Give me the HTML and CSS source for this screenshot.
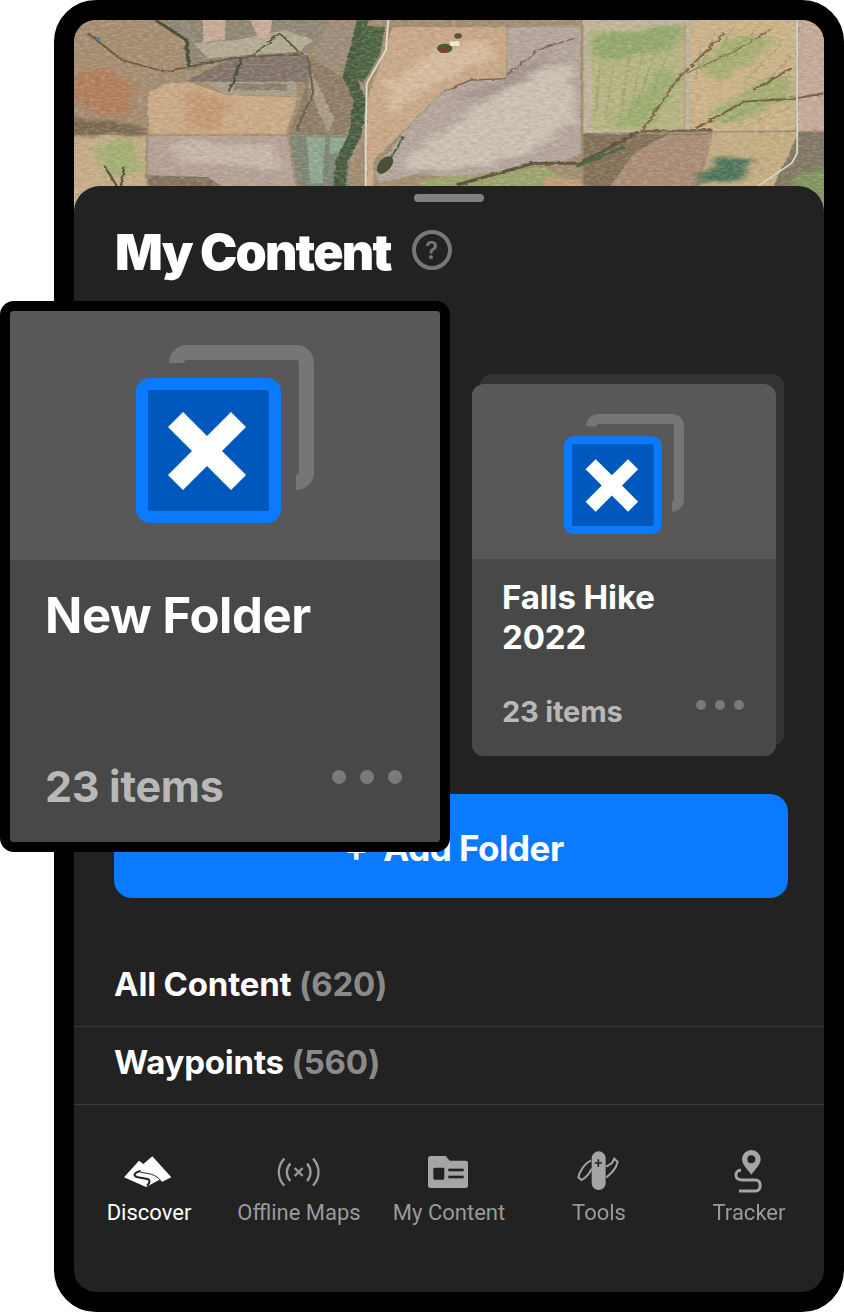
FILE: index.html
```html
<!DOCTYPE html>
<html lang="en">
<head>
<meta charset="utf-8">
<title>My Content</title>
<link rel="stylesheet" href="styles.css">
</head>
<body>
<svg class="defs" width="0" height="0" aria-hidden="true">
  <symbol id="folder-x" viewBox="136 345 178 178">
    <path fill="#767676" d="M169 363A18 18 0 0 1 187 345H296A18 18 0 0 1 314 363V472A18 18 0 0 1 296 490V475Q299 475 299 472V363Q299 360 296 360H187Q184 360 184 363Z"/>
    <rect x="136" y="378" width="145" height="145" rx="14" fill="#0a7aff"/>
    <rect x="148" y="390" width="121" height="121" rx="2" fill="#0058bd"/>
    <path fill="#fff" d="M183 412L207 436L231 412L246 427L222 451L246 475L231 490L207 466L183 490L168 475L192 451L168 427Z"/>
  </symbol>
  <filter id="sat" x="-5%" y="-5%" width="110%" height="110%">
    <feTurbulence type="fractalNoise" baseFrequency="0.03 0.06" numOctaves="3" seed="4" result="n"/>
    <feDisplacementMap in="SourceGraphic" in2="n" scale="7" xChannelSelector="R" yChannelSelector="G" result="d"/>
    <feGaussianBlur in="d" stdDeviation="1.6 1"/>
  </filter>
  <filter id="soft" x="-10%" y="-10%" width="120%" height="120%">
    <feTurbulence type="fractalNoise" baseFrequency="0.02 0.04" numOctaves="4" seed="7" result="n"/>
    <feDisplacementMap in="SourceGraphic" in2="n" scale="40" result="d"/>
    <feGaussianBlur in="d" stdDeviation="9 5"/>
  </filter>
  <filter id="line" x="-5%" y="-5%" width="110%" height="110%">
    <feTurbulence type="fractalNoise" baseFrequency="0.05 0.09" numOctaves="3" seed="12" result="n"/>
    <feDisplacementMap in="SourceGraphic" in2="n" scale="9" result="d"/>
    <feGaussianBlur in="d" stdDeviation="1.4 .8"/>
  </filter>
  <filter id="grain" x="0" y="0" width="100%" height="100%">
    <feTurbulence type="fractalNoise" baseFrequency="0.09 0.16" numOctaves="4" seed="9"/>
    <feColorMatrix values="0 0 0 0 .95  0 0 0 0 .9  0 0 0 0 .82  1.8 0 0 0 -.72"/>
  </filter>
  <filter id="grain-dark" x="0" y="0" width="100%" height="100%">
    <feTurbulence type="fractalNoise" baseFrequency="0.07 0.12" numOctaves="4" seed="21"/>
    <feColorMatrix values="0 0 0 0 .25  0 0 0 0 .2  0 0 0 0 .12  1.8 0 0 0 -.72"/>
  </filter>
</svg>

<div class="phone">
  <div class="screen">
    <svg class="map" viewBox="0 0 1568 600" preserveAspectRatio="none" aria-hidden="true">
      <rect width="1568" height="600" fill="#a08b70"/>
      <g filter="url(#sat)">
        <path fill="#a58b6f" d="M-20-20H240V130L150 165V345H-20Z"/>
        <path fill="#8d8472" d="M170-20H540L525 60L480 100L330 110L235 155L230 60Z"/>
        <path fill="#b3aa92" d="M250 70L340 60L440 30L500 60L470 95L360 105L280 115Z"/>
        <path fill="#c9ab98" d="M270-20H320L315 60L270 65Z"/>
        <path fill="#c9ab98" d="M360-20H418L405 60L385 50Z"/>
        <path fill="#7e6f67" d="M235 182L335 112L490 105L490 186H250Z"/>
        <path fill="#a89c88" d="M270 185H465V228L320 225Z"/>
        <rect x="335" y="190" width="110" height="20" fill="#867c6e"/>
        <path fill="#cca985" d="M155 345V220L190 192L240 186L320 226L468 232L442 345Z"/>
        <path fill="#8c7a64" d="M495 110L565 175L590 240L570 345H450L480 220Z"/>
        <path fill="#a99a84" d="M495 150L545 300L530 340L490 200Z"/>
        <path fill="#9b8a78" d="M525 15L588 10L565 150L500 112Z"/>
        <path fill="#c7ad88" d="M-20 345H150V600H-20Z"/>
        <path fill="#b5a097" d="M155 347H445L472 600H155Z"/>
        <path fill="#7f6f5c" d="M155 465L280 472L320 510H155Z"/>
        <path fill="#7a8472" d="M450 347H575V510H470Z"/>
        <path fill="#8ba690" d="M485 350H525L520 490H495Z"/>
        <path fill="#8ba690" d="M535 352H570L560 400H535Z"/>
        <path fill="none" stroke="#42593a" stroke-width="26" d="M606-10L575 170L598 240L588 345L560 420L548 600"/>
        <path fill="#47603e" d="M610 20H650L640 100L605 190L585 170Z"/>
        <path fill="#c9a887" d="M612 600V245L650 90L666 20H905V176L830 180L770 215L690 330L626 420L626 600Z"/>
        <path fill="#b3a59d" d="M905 20L1060 15V400L1020 425L940 430L890 465L790 475L720 460L640 490L628 455L690 335L770 218L830 182L905 176Z"/>
        <path fill="#bfb59c" d="M1065-20H1510V332L1065 340Z"/>
        <path fill="#b6b481" d="M1080 30H1275V330H1085Z"/>
        <path fill="#cdb389" d="M1290 0H1505V330H1290Z"/>
        <path fill="#c6aa98" d="M1515-20H1600V332H1515Z"/>
        <path fill="#7f6d54" d="M1065 343H1335V600H1065Z"/>
        <path fill="#a98b74" d="M1170 400L1240 345H1335V500L1120 500Z"/>
        <path fill="#c5ad82" d="M1337 337H1510V420L1430 600H1290Z"/>
        <path fill="#7d7460" d="M1515 337H1600V600H1430Z"/>
        <path fill="#9aa36b" d="M720 480L980 440L1062 498V600H720Z"/>
        <path fill="#bf9c78" d="M980 470L1060 480V600H980Z"/>
      </g>
      <g filter="url(#soft)">
        <path fill="#b4754f" opacity=".75" d="M-20 170L60 140L120 190L110 290L50 280L-20 230Z"/>
        <path fill="#6b5c46" opacity=".8" d="M-20 290L60 300L150 325V345H-20Z"/>
        <path fill="#c39268" opacity=".7" d="M240 200L320 240L300 330L230 330Z"/>
        <path fill="#dcc3a6" opacity=".75" d="M650 190L760 90L860 60L880 110L760 190L660 290Z"/>
        <path fill="#d5c8bc" opacity=".8" d="M700 400L870 240L940 170L1040 120L1050 300L950 400L820 440L690 450Z"/>
        <path fill="#998888" opacity=".65" d="M790 240L900 175L1000 80L950 180L860 230Z"/>
        <path fill="#8aa764" opacity=".85" d="M1085 50L1270 10V70L1130 120L1085 110Z"/>
        <path fill="#93ad68" opacity=".7" d="M1120 320L1230 150L1270 170L1200 320Z"/>
        <path fill="#97ad68" opacity=".75" d="M1300 130L1390 40L1470 60L1350 190Z"/>
        <path fill="#98ad6a" opacity=".8" d="M1300 310L1400 215L1500 160V240L1390 300Z"/>
        <path fill="#9ab06d" opacity=".8" d="M40 380L125 355L145 450L70 480Z"/>
        <path fill="#d8cdc2" opacity=".5" d="M200 370H420L440 450L220 430Z"/>
        <path fill="#3e6e52" opacity=".95" d="M1345 410L1425 415L1395 480L1295 495Z"/>
        <path fill="#7f9c5c" opacity=".8" d="M1510 470L1600 430V600H1500Z"/>
      </g>
      <g fill="none" stroke="#7f9e5c" stroke-width="3" opacity=".55" filter="url(#line)">
        <path d="M1100 130L1090 290M1130 120L1110 300M1160 110L1140 320M1190 90L1160 300M1220 80L1170 280M1250 60L1200 260"/>
        <path d="M1310 90L1300 180M1340 40L1310 150M1380 20L1340 110M1430 20L1370 120M1480 70L1400 190M1500 110L1420 220M1450 240L1340 320M1500 260L1400 320"/>
      </g>
      <rect width="1568" height="600" filter="url(#grain)" opacity=".32"/>
      <rect width="1568" height="600" filter="url(#grain-dark)" opacity=".3"/>
      <g fill="none" filter="url(#line)">
        <path stroke="#6a5c42" stroke-width="5" d="M30 40L100 120L190 155L240 140L330 115L480 100"/>
        <path stroke="#4a553b" stroke-width="6" d="M350 115L325 215"/>
        <path stroke="#4a553b" stroke-width="8" d="M170 0L235 60L240 140"/>
        <path stroke="#4f5a40" stroke-width="4" d="M370 110L430 40L470 95"/>
        <path stroke="#6c6456" stroke-width="5" d="M490 110L500 220L465 330"/>
        <path stroke="#7d6557" stroke-width="4" d="M905 165L970 90L1045 55"/>
        <path stroke="#7d6557" stroke-width="4" d="M905 176L830 180L775 212"/>
        <path stroke="#806a4e" stroke-width="5" d="M1190 330L1260 180L1360 40"/>
        <path stroke="#7a6448" stroke-width="6" d="M1300 325L1400 245L1510 235L1568 220"/>
        <path stroke="#7a6448" stroke-width="6" d="M1420 210L1500 145"/>
        <path stroke="#806a4e" stroke-width="3" d="M1280 160L1380 95L1460 25"/>
        <path stroke="#635640" stroke-width="9" d="M1180 335L1060 430L960 430L800 495"/>
        <path stroke="#4c6a45" stroke-width="7" d="M1050 440L1150 380"/>
        <path stroke="#5f5542" stroke-width="5" d="M65 440L90 500M105 440L98 500"/>
        <path stroke="#50684a" stroke-width="5" d="M690 350L660 420"/>
        <path stroke="#74654c" stroke-width="8" d="M1185 335L1335 330"/>
      </g>
      <g fill="none">
        <path stroke="#dcdccf" stroke-width="4" d="M657 0L652 90L612 190L610 340V600"/>
        <path stroke="#d8d4c8" stroke-width="4" d="M1512 0V400L1500 430L1430 498"/>
        <path stroke="#8f7e66" stroke-width="2" opacity=".6" d="M0 343H600M1065 340L1510 332M905 20H1060V400M665 20H905V176"/>
        <path stroke="#af8f6c" stroke-width="2" d="M1277 0V330M1063 0V340"/>
      </g>
      <ellipse cx="650" cy="435" rx="14" ry="28" fill="#4a5036" transform="rotate(25 650 435)"/>
      <ellipse cx="775" cy="85" rx="16" ry="14" fill="#4a5a36"/>
      <ellipse cx="772" cy="92" rx="7" ry="7" fill="#8c3a30"/>
      <rect x="786" y="64" width="20" height="14" fill="#eee8cc"/>
      <circle cx="803" cy="48" r="8" fill="#5a5044"/>
      <circle cx="50" cy="57" r="5" fill="#4a7ca8"/>
    </svg>

    <div class="sheet">
      <div class="handle"></div>
      <div class="title-row">
        <h1 class="title">My Content</h1>
        <span class="help">?</span>
      </div>

      <div class="carousel">
        <article class="card">
          <div class="card-top">
            <svg class="folder-icon"><use href="#folder-x"/></svg>
          </div>
          <div class="card-body">
            <h2 class="card-name">Falls Hike<br>2022</h2>
            <div class="card-foot">
              <span class="card-count">23 items</span>
              <span class="dots"><i></i><i></i><i></i></span>
            </div>
          </div>
        </article>
      </div>

      <button class="add-btn"><span class="plus">+</span> Add Folder</button>

      <ul class="list">
        <li class="list-row">All Content <span class="count">(620)</span></li>
        <li class="list-row">Waypoints <span class="count">(560)</span></li>
      </ul>

      <nav class="nav">
        <a class="nav-item active">
          <svg class="nav-icon" viewBox="0 0 210 144">
            <path fill="#fff" d="M30 88L75 38L88 48L115 25L172 88L145 101L135 96L96 117Z"/>
            <path fill="none" stroke="#222" stroke-width="6" d="M80 69C58 74 56 84 72 88L100 93C110 96 108 104 99 113"/>
            <path fill="none" stroke="#222" stroke-width="3" d="M80 73C100 76 128 78 141 100"/>
          </svg>
          <span>Discover</span>
        </a>
        <a class="nav-item">
          <svg class="nav-icon" viewBox="0 0 180 144" fill="none" stroke="#9a9a9a" stroke-width="7">
            <path d="M46 32C24 55 24 90 46 113"/>
            <path d="M64 47C50 62 50 84 64 99"/>
            <path d="M132 32C154 55 154 90 132 113"/>
            <path d="M114 47C128 62 128 84 114 99"/>
            <path d="M77 60L101 84M101 60L77 84"/>
          </svg>
          <span>Offline Maps</span>
        </a>
        <a class="nav-item">
          <svg class="nav-icon" viewBox="0 0 180 144">
            <path fill="#a5a5a5" d="M35 24H80L92 38H140Q147 38 147 45V112Q147 120 140 120H35Q27 120 27 112V32Q27 24 35 24Z"/>
            <rect x="43" y="59" width="33" height="36" rx="5" fill="#222"/>
            <rect x="88" y="62" width="46" height="8" fill="#222"/>
            <rect x="88" y="83" width="46" height="8" fill="#222"/>
          </svg>
          <span>My Content</span>
        </a>
        <a class="nav-item">
          <svg class="nav-icon" viewBox="0 0 180 144">
            <rect x="68" y="10" width="42" height="116" rx="21" fill="#a5a5a5"/>
            <path stroke="#222" stroke-width="5" d="M88 34V56M77 45H99"/>
            <path fill="none" stroke="#a5a5a5" stroke-width="6" d="M66 38C45 46 30 76 28 88L38 96C52 88 62 76 68 62"/>
            <path fill="none" stroke="#a5a5a5" stroke-width="6" d="M112 88C128 76 142 58 146 42L136 32L129 45L112 56"/>
          </svg>
          <span>Tools</span>
        </a>
        <a class="nav-item">
          <svg class="nav-icon" viewBox="0 0 180 144">
            <path fill="#a5a5a5" fill-rule="evenodd" d="M97 6A28 28 0 0 1 125 34C125 50 107 66 97 80C87 66 69 50 69 34A28 28 0 0 1 97 6ZM97 22A12 12 0 1 0 97 46A12 12 0 1 0 97 22Z"/>
            <path fill="none" stroke="#a5a5a5" stroke-width="9" d="M66 66C46 68 44 96 70 96H110C128 96 128 129 110 129H60"/>
          </svg>
          <span>Tracker</span>
        </a>
      </nav>
    </div>
  </div>
</div>

<article class="card card-pop">
  <div class="card-top">
    <svg class="folder-icon"><use href="#folder-x"/></svg>
  </div>
  <div class="card-body">
    <h2 class="card-name">New Folder</h2>
    <div class="card-foot">
      <span class="card-count">23 items</span>
      <span class="dots"><i></i><i></i><i></i></span>
    </div>
  </div>
</article>
</body>
</html>
```
FILE: styles.css
```css
* { box-sizing: border-box; }

html, body { margin: 0; padding: 0; background: #fff; }

body {
  position: relative;
  width: 844px;
  height: 1312px;
  overflow: hidden;
  font-family: Inter, "Liberation Sans", sans-serif;
}

.defs { position: absolute; }

.phone {
  width: 790px;
  height: 1312px;
  margin-left: 54px;
  border: 20px solid #000;
  border-radius: 42px;
  background: #000;
}

.screen {
  display: flex;
  flex-direction: column;
  height: 100%;
  border-radius: 22px;
  overflow: hidden;
}

.map {
  display: block;
  flex: none;
  width: 750px;
  height: 200px;
}

.sheet {
  position: relative;
  flex: 1;
  margin-top: -34px;
  display: flex;
  flex-direction: column;
  background: #222;
  border-radius: 26px 26px 0 0;
}

.handle {
  width: 70px;
  height: 8px;
  margin: 8px auto 0;
  border-radius: 4px;
  background: #808080;
}

.title-row {
  display: flex;
  align-items: center;
  gap: 21px;
  height: 56px;
  margin-top: 22px;
  padding-left: 41px;
}

.title {
  margin: 0;
  font-size: 50px;
  line-height: 56px;
  font-weight: 900;
  letter-spacing: -1.8px;
  color: #fff;
}

.help {
  display: flex;
  align-items: center;
  justify-content: center;
  width: 40px;
  height: 40px;
  margin-top: -4px;
  border: 4px solid #777;
  border-radius: 50%;
  color: #777;
  font-size: 24px;
  font-weight: 600;
}

.carousel {
  display: flex;
  padding: 104px 0 0 398px;
}

.card {
  position: relative;
  display: flex;
  flex-direction: column;
  width: 304px;
  height: 372px;
  border-radius: 12px;
  background: #484848;
}

.carousel .card::before {
  content: "";
  position: absolute;
  z-index: 0;
  top: -10px;
  left: 8px;
  width: 100%;
  height: 100%;
  border-radius: 12px;
  background: #333;
}

.card-top {
  position: relative;
  display: flex;
  justify-content: center;
  flex: none;
  height: 175px;
  padding-top: 30px;
  border-radius: 12px 12px 0 0;
  background: #585858;
}

.folder-icon {
  width: 120px;
  height: 120px;
}

.card-body {
  position: relative;
  flex: 1;
  display: flex;
  flex-direction: column;
  justify-content: space-between;
  padding: 18px 32px 27px 30px;
  border-radius: 0 0 12px 12px;
  background: #484848;
}

.card-name {
  margin: 0;
  font-size: 33px;
  line-height: 40px;
  font-weight: 700;
  letter-spacing: -0.1px;
  color: #fff;
}

.card-foot {
  display: flex;
  justify-content: space-between;
}

.card-count {
  font-size: 29px;
  line-height: 34px;
  font-weight: 700;
  letter-spacing: -0.2px;
  color: #b8b8b8;
}

.dots {
  display: flex;
  gap: 9px;
  margin-top: 5px;
}

.dots i {
  width: 10px;
  height: 10px;
  border-radius: 50%;
  background: #7a7a7a;
}

.card-pop {
  position: absolute;
  top: 301px;
  left: 0;
  width: 450px;
  height: 551px;
  border: 10px solid #000;
  border-radius: 14px;
  box-sizing: border-box;
}

.card-pop .card-top {
  height: 249px;
  padding-top: 34px;
  border-radius: 4px 4px 0 0;
}

.card-pop .folder-icon {
  width: 178px;
  height: 178px;
}

.card-pop .card-body {
  padding: 28px 38px 31px 35px;
  border-radius: 0 0 4px 4px;
}

.card-pop .card-name {
  font-size: 49px;
  line-height: 56px;
  letter-spacing: -0.4px;
}

.card-pop .card-count {
  font-size: 43px;
  line-height: 50px;
  letter-spacing: -0.3px;
}

.card-pop .dots {
  gap: 14px;
  margin-top: 9px;
}

.card-pop .dots i {
  width: 14px;
  height: 14px;
}

.add-btn {
  width: 674px;
  height: 104px;
  margin: 38px 0 0 40px;
  padding: 3px 0 0 6px;
  border: 0;
  border-radius: 18px;
  background: #0a7aff;
  color: #fff;
  font-family: inherit;
  font-size: 35px;
  font-weight: 700;
  letter-spacing: -0.5px;
}

.plus { margin-right: 8px; }

.list {
  margin: 51px 0 0;
  padding: 0;
  list-style: none;
}

.list-row {
  height: 78px;
  border-bottom: 1px solid #3a3a3a;
  padding: 12px 0 0 40px;
  font-size: 33px;
  line-height: 46px;
  font-weight: 700;
  letter-spacing: -0.2px;
  color: #fff;
}

.count { color: #8a8a8a; }

.nav {
  display: grid;
  grid-template-columns: repeat(5, 150px);
}

.nav-item {
  display: flex;
  flex-direction: column;
  align-items: center;
  padding-top: 43px;
  font-family: Roboto, "Liberation Sans", sans-serif;
  font-size: 22px;
  line-height: 28px;
  color: #9a9a9a;
}

.nav-item span { margin-top: 3px; }

.nav-item.active { color: #fff; }

.nav-icon {
  display: block;
  width: 70px;
  height: 48px;
}
```
